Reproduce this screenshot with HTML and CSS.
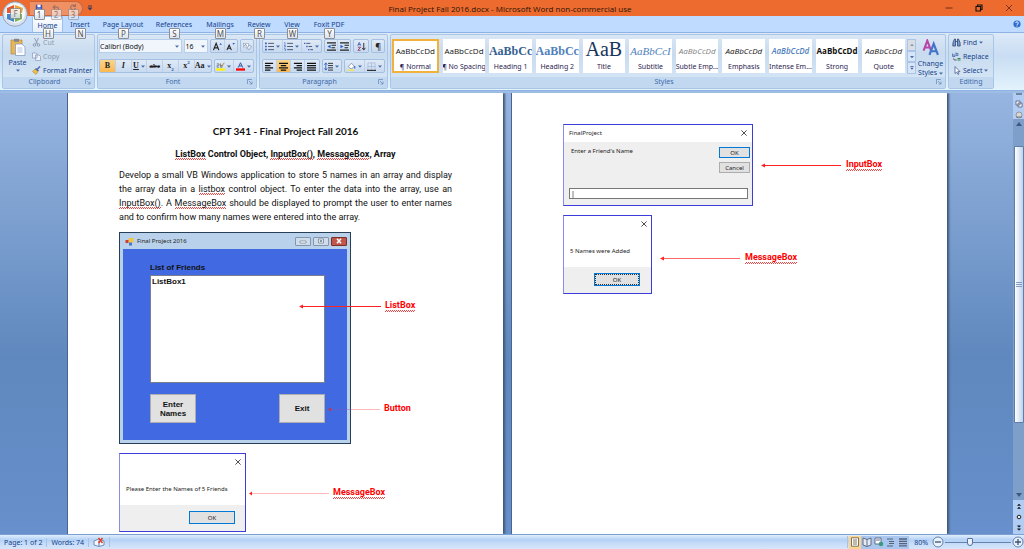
FILE: index.html
```html
<!DOCTYPE html>
<html lang="en">
<head>
<meta charset="utf-8">
<title>Final Project Fall 2016.docx - Microsoft Word non-commercial use</title>
<link rel="stylesheet" href="styles.css">
</head>
<body>
<svg class="defs" aria-hidden="true">
  <symbol id="caret" viewBox="0 0 4 3"><path d="M0 .5h4L2 2.8z" fill="#4a6ea8"/></symbol>
  <symbol id="launch" viewBox="0 0 6 6"><path d="M.5 5V.5H5M2 2l3 3M5 2.6V5H2.6" fill="none" stroke="#6f8fbd" stroke-width=".8"/></symbol>
  <symbol id="cross" viewBox="0 0 6 6"><path d="M.4.4l5.2 5.2M5.6.4L.4 5.6" stroke="#222" stroke-width=".8" fill="none"/></symbol>
</svg>

<header class="titlebar">
  <button class="orb" aria-label="Office menu">
    <svg viewBox="0 0 26 26"><circle cx="13" cy="13" r="12.3" fill="#d8e2ee" stroke="#8496ad" stroke-width=".8"/><circle cx="13" cy="12" r="10" fill="#f7f9fc"/><path d="M5 7l7-3v8H5z" fill="#e9562a"/><path d="M13 4l8 3-1 5h-7z" fill="#f0a52f"/><path d="M5 13h7v8l-7-3z" fill="#4286c9"/><path d="M13 13h7v5l-7 3z" fill="#7ab648"/></svg>
    <span class="keytip">F</span>
  </button>
  <div class="quick">
    <button aria-label="Save"><svg viewBox="0 0 10 10"><path d="M1 1h8v8H1z" fill="#3c50b4"/><path d="M3 1h4v3H3zM2.500 6h5v3h-5z" fill="#fff"/></svg><span class="keytip">1</span></button>
    <button aria-label="Undo" class="off"><svg viewBox="0 0 10 10"><path d="M2 4h4a2 2 0 010 4M4 1.500L1.500 4 4 6.500" fill="none" stroke="#a3705f" stroke-width="1.500"/></svg><span class="keytip">2</span></button>
    <button aria-label="Redo" class="off"><svg viewBox="0 0 10 10"><path d="M8 5a3 3 0 11-1-3M8 0v3H5" fill="none" stroke="#a3705f" stroke-width="1.500"/></svg><span class="keytip">3</span></button>
  </div>
  <button class="more" aria-label="Customize"><svg viewBox="0 0 6 6"><path d="M1 1h4" stroke="#333c66"/><path d="M.5 2.500h5L3 5.500z" fill="#333c66"/></svg></button>
  <h1>Final Project Fall 2016.docx - Microsoft Word non-commercial use</h1>
  <div class="syscontrols">
    <button aria-label="Minimize"><svg viewBox="0 0 8 8"><path d="M.5 4h7" stroke="#5a2a16" stroke-width=".9"/></svg></button>
    <button aria-label="Restore"><svg viewBox="0 0 8 8"><path d="M1 2.500h4.500V7H1zM2.500 2.500V1H7v4.500H5.500" fill="none" stroke="#111" stroke-width="1.100"/></svg></button>
    <button aria-label="Close"><svg viewBox="0 0 8 8"><path d="M1 1l6 6M7 1L1 7" stroke="#5a2a16" stroke-width=".8"/></svg></button>
  </div>
</header>

<nav class="tabs">
  <button class="tab active">Home<span class="keytip">H</span></button>
  <button class="tab">Insert<span class="keytip">N</span></button>
  <button class="tab">Page Layout<span class="keytip">P</span></button>
  <button class="tab">References<span class="keytip">S</span></button>
  <button class="tab">Mailings<span class="keytip">M</span></button>
  <button class="tab">Review<span class="keytip">R</span></button>
  <button class="tab">View<span class="keytip">W</span></button>
  <button class="tab">Foxit PDF<span class="keytip">Y</span></button>
  <button class="help" aria-label="Help"><svg viewBox="0 0 8 8"><circle cx="4" cy="4" r="3.600" fill="#2f6fd0"/><path d="M2.700 3c0-1.600 2.600-1.600 2.600 0 0 1-1.300 1-1.300 2M4 5.600v1" stroke="#fff" fill="none" stroke-width=".9"/></svg></button>
</nav>

<div class="ribbon">
  <section class="group clipboard">
    <div class="body">
      <button class="big"><svg viewBox="0 0 16 18"><path d="M1 2h11v14H1z" fill="#e8b656" stroke="#b98731" stroke-width=".7"/><path d="M4 .8h5v3H4z" fill="#7d8797"/><path d="M5.500 6H12l3 3v8.500H5.500z" fill="#fff" stroke="#7a94bf" stroke-width=".7"/><path d="M7.500 10h5M7.500 12h5M7.500 14h5" stroke="#9db4dc" stroke-width=".8"/></svg>Paste<svg class="caret"><use href="#caret"/></svg></button>
      <div class="stack">
        <button class="dim"><svg viewBox="0 0 9 9"><path d="M2.500 0l3 6M6.500 0l-3 6" stroke="#8d9db5" fill="none"/><circle cx="2.500" cy="7" r="1.300" fill="none" stroke="#8d9db5"/><circle cx="6.500" cy="7" r="1.300" fill="none" stroke="#8d9db5"/></svg>Cut</button>
        <button class="dim"><svg viewBox="0 0 9 9"><path d="M.5 1H4l1 1v4H.5zM3.500 3H7l1.500 1.500v4h-5z" fill="#eef3fa" stroke="#8fa2c0" stroke-width=".8"/></svg>Copy</button>
        <button><svg viewBox="0 0 9 9"><path d="M8 .5L5 3.500" stroke="#596fa8" stroke-width="1.600"/><path d="M3 3l3 2.500L4 8.500 .5 5.500z" fill="#f0c045" stroke="#a57c28" stroke-width=".5"/><path d="M3.500 2.500l3 2.500" stroke="#4a60a0" stroke-width="1.300"/></svg>Format Painter</button>
      </div>
    </div>
    <footer>Clipboard<svg class="launch"><use href="#launch"/></svg></footer>
  </section>

  <section class="group font">
    <div class="body rows">
      <div class="row">
        <span class="combo wide"><select aria-label="Font"><option>Calibri (Body)</option></select><svg class="caret"><use href="#caret"/></svg></span>
        <span class="combo narrow"><select aria-label="Font size"><option>16</option></select><svg class="caret"><use href="#caret"/></svg></span>
        <span class="bar w28"><button aria-label="Grow font"><svg viewBox="0 0 10 10"><path d="M.5 9L3.500 1.500 6.500 9M1.600 6.500h3.800" fill="none" stroke="#222" stroke-width="1.300"/><path d="M7 3h3L8.500 1z" fill="#2b5fc7"/></svg></button><button aria-label="Shrink font"><svg viewBox="0 0 10 10"><path d="M1 9l2.500-5.500L6 9M2 7h3" fill="none" stroke="#222" stroke-width="1.200"/><path d="M7 1h3L8.500 3z" fill="#2b5fc7"/></svg></button></span>
        <span class="bar w14"><button aria-label="Clear formatting"><svg viewBox="0 0 10 8"><rect x=".5" y=".5" width="5.500" height="4" fill="#fff" stroke="#8093b5" stroke-width=".6"/><path d="M1.500 3.500l1.300-2 1.300 2" stroke="#345" fill="none" stroke-width=".6"/><path d="M4 6l3-3.500 2.500 1.500L7 7.500z" fill="#e7ecf5" stroke="#6c7c9c" stroke-width=".6"/></svg></button></span>
      </div>
      <div class="row">
        <span class="bar w113"><button class="serif on"><b>B</b></button><button class="serif"><i>I</i></button><button class="serif"><u>U</u><svg class="caret"><use href="#caret"/></svg></button><button class="serif"><s>abc</s></button><button class="serif tight">x<sub>2</sub></button><button class="serif tight">x<sup>2</sup></button><button class="serif">Aa<svg class="caret"><use href="#caret"/></svg></button></span>
        <span class="bar w41"><button aria-label="Highlight"><svg viewBox="0 0 12 12"><path d="M1 2.500h3v2H1.500V7H4M6 2v5h2V4.500H6" fill="none" stroke="#555" stroke-width=".8"/><path d="M11 1L7.500 6" stroke="#b48b31" stroke-width="1.300"/><path d="M0 8.500h12v3H0z" fill="#fff200"/></svg><svg class="caret"><use href="#caret"/></svg></button><button aria-label="Font color"><svg viewBox="0 0 12 12"><path d="M3 7.500L6 1l3 6.500M4.200 5.300h3.600" fill="none" stroke="#35509c" stroke-width="1.300"/><path d="M0 8.500h12v3H0z" fill="#f00"/></svg><svg class="caret"><use href="#caret"/></svg></button></span>
      </div>
    </div>
    <footer>Font<svg class="launch"><use href="#launch"/></svg></footer>
  </section>

  <section class="group paragraph">
    <div class="body rows">
      <div class="row">
        <span class="bar w60">
          <button aria-label="Bullets"><svg viewBox="0 0 10 10"><path d="M3.500 1.500H10M3.500 5H10M3.500 8.500H10" stroke="#444c66"/><path d="M0 1.500h2M0 5h2M0 8.500h2" stroke="#3c63c4" stroke-width="1.800"/></svg><svg class="caret"><use href="#caret"/></svg></button>
          <button aria-label="Numbering"><svg viewBox="0 0 10 10"><path d="M3.500 1.500H10M3.500 5H10M3.500 8.500H10" stroke="#444c66"/><path d="M1 0v3M0 4h1.500v1.500H0M0 7.500h1.500V10" stroke="#3c63c4" fill="none" stroke-width=".8"/></svg><svg class="caret"><use href="#caret"/></svg></button>
          <button aria-label="Multilevel list"><svg viewBox="0 0 10 10"><path d="M2.500 1.500H7M5 5h4M7 8.500h3" stroke="#444c66"/><path d="M0 1.500h1.500M2.500 5H4M4.500 8.500H6" stroke="#3c63c4" stroke-width="1.500"/></svg><svg class="caret"><use href="#caret"/></svg></button>
        </span>
        <span class="bar w28">
          <button aria-label="Decrease indent"><svg viewBox="0 0 10 10"><path d="M0 1h10M5 3.700h5M5 6.300h4M0 9h10" stroke="#222" stroke-width="1.200"/><path d="M4 3v4L.5 5z" fill="#2b5fc7"/></svg></button>
          <button aria-label="Increase indent"><svg viewBox="0 0 10 10"><path d="M0 1h10M5 3.700h5M5 6.300h4M0 9h10" stroke="#222" stroke-width="1.200"/><path d="M.5 3v4L4 5z" fill="#2b5fc7"/></svg></button>
        </span>
        <span class="bar w16"><button aria-label="Sort"><svg viewBox="0 0 10 10"><path d="M.8 4L2.500.5 4.200 4M1.200 3h2.600" stroke="#3f5fb5" fill="none"/><path d="M1 5.800h3L1 9.200h3" stroke="#9b3060" fill="none"/><path d="M7.500 1v7M5.800 6.500L7.500 9l1.700-2.500" stroke="#222" fill="none"/></svg></button></span>
        <span class="bar w14"><button class="pilcrow">¶</button></span>
      </div>
      <div class="row">
        <span class="bar w57">
          <button aria-label="Align left"><svg viewBox="0 0 10 10"><path d="M0 1.500h9M0 4h6M0 6.500h9M0 9h6" stroke="#111" stroke-width="1.400"/></svg></button>
          <button aria-label="Center" class="on"><svg viewBox="0 0 10 10"><path d="M0 1.500h10M2 4h6M0 6.500h10M2 9h6" stroke="#111" stroke-width="1.400"/></svg></button>
          <button aria-label="Align right"><svg viewBox="0 0 10 10"><path d="M1 1.500h9M4 4h6M1 6.500h9M4 9h6" stroke="#111" stroke-width="1.400"/></svg></button>
          <button aria-label="Justify"><svg viewBox="0 0 10 10"><path d="M0 1.500h10M0 4h10M0 6.500h10M0 9h10" stroke="#111" stroke-width="1.400"/></svg></button>
        </span>
        <span class="bar w20"><button aria-label="Line spacing"><svg viewBox="0 0 10 10"><path d="M4.500 1.500H10M4.500 4H10M4.500 6.500H10M4.500 9H10" stroke="#222"/><path d="M2 1v8M.5 3L2 1l1.500 2M.5 7L2 9l1.500-2" stroke="#2b5fc7" fill="none"/></svg><svg class="caret"><use href="#caret"/></svg></button></span>
        <span class="bar w41">
          <button aria-label="Shading"><svg viewBox="0 0 11 11"><path d="M1.500 5.500L5.500 1.500l3.500 4-4 3z" fill="#fff" stroke="#667ba5" stroke-width=".8"/><path d="M9.500 5v3" stroke="#2b5fc7" stroke-width="1.300"/><path d="M0 9h9v2H0z" fill="#f3e26b"/></svg><svg class="caret"><use href="#caret"/></svg></button>
          <button aria-label="Borders"><svg viewBox="0 0 10 10"><path d="M1 1v8M5 1v8M9 1v8M1 1h8M1 5h8" stroke="#9fb1cf" stroke-width=".7"/><path d="M0 9.300h10" stroke="#222" stroke-width="1.200"/></svg><svg class="caret"><use href="#caret"/></svg></button>
        </span>
      </div>
    </div>
    <footer>Paragraph<svg class="launch"><use href="#launch"/></svg></footer>
  </section>

  <section class="group styles">
    <div class="body">
      <div class="gallery">
        <button class="style chosen"><span class="sample">AaBbCcDd</span><span>¶ Normal</span></button>
        <button class="style"><span class="sample">AaBbCcDd</span><span>¶ No Spacing</span></button>
        <button class="style"><span class="sample h-one">AaBbCc</span><span>Heading 1</span></button>
        <button class="style"><span class="sample h-two">AaBbCc</span><span>Heading 2</span></button>
        <button class="style"><span class="sample title">AaB</span><span>Title</span></button>
        <button class="style"><span class="sample subtitle">AaBbCcI</span><span>Subtitle</span></button>
        <button class="style"><span class="sample subtle">AaBbCcDd</span><span>Subtle Emp...</span></button>
        <button class="style"><span class="sample emph">AaBbCcDd</span><span>Emphasis</span></button>
        <button class="style"><span class="sample intense">AaBbCcDd</span><span>Intense Em...</span></button>
        <button class="style"><span class="sample strong">AaBbCcDd</span><span>Strong</span></button>
        <button class="style"><span class="sample emph">AaBbCcDd</span><span>Quote</span></button>
      </div>
      <div class="scroller">
        <button class="faded" aria-label="Up"><svg viewBox="0 0 4 3"><path d="M0 2.500h4L2 .3z" fill="#8a9ab3"/></svg></button>
        <button aria-label="Down"><svg viewBox="0 0 4 3"><use href="#caret"/></svg></button>
        <button aria-label="More styles"><svg viewBox="0 0 4 5"><path d="M0 .6h4" stroke="#3c5a94"/><path d="M0 2.200h4L2 4.600z" fill="#3c5a94"/></svg></button>
      </div>
      <button class="big change"><svg viewBox="0 0 16 16"><path d="M1.500 11L5 1.500 8.500 11M2.600 8h4.800" fill="none" stroke="#b944a8" stroke-width="1.900"/><path d="M7 15l4-10.500L15 15M8.500 11.500h5" fill="none" stroke="#4474c8" stroke-width="2"/></svg>Change<span>Styles <svg class="caret"><use href="#caret"/></svg></span></button>
    </div>
    <footer>Styles<svg class="launch"><use href="#launch"/></svg></footer>
  </section>

  <section class="group editing">
    <div class="body stack">
      <button><svg viewBox="0 0 9 9"><path d="M1 4.500L2.500 1h1v7H.8zM8 4.500L6.500 1h-1v7h2.700zM3.500 3.500h2" fill="#7f9dcc" stroke="#2e4778" stroke-width=".8"/></svg>Find <svg class="caret"><use href="#caret"/></svg></button>
      <button><svg viewBox="0 0 9 9"><path d="M.5 1.500v3h2.500V3H1M4 .5v3h2v-2H4" fill="none" stroke="#5474ad" stroke-width=".9"/><path d="M1.500 6.500c0 1.500 1.500 1.500 3 1.500" fill="none" stroke="#444"/><path d="M5.500 6.500H8.500M5.500 8h3" stroke="#31824b"/></svg>Replace</button>
      <button><svg viewBox="0 0 9 9"><path d="M3 .5v7l1.700-1.400L6 8.500l1-.6-1.200-2.300H8z" fill="#fff" stroke="#465e92" stroke-width=".8"/></svg>Select <svg class="caret"><use href="#caret"/></svg></button>
    </div>
    <footer>Editing</footer>
  </section>
</div>

<div class="workspace">
  <main class="desk">
    <article class="page">
      <h2>CPT 341 - Final Project Fall 2016</h2>
      <h3><span class="typo">ListBox</span> Control Object, <span class="typo">InputBox()</span>, <span class="typo">MessageBox</span>, Array</h3>
      <p class="intro">
        <span>Develop a small VB Windows application to store 5 names in an array and display</span>
        <span>the array data in a <span class="typo">listbox</span> control object. To enter the data into the array, use an</span>
        <span><span class="typo">InputBox()</span>. A <span class="typo">MessageBox</span> should be displayed to prompt the user to enter names</span>
        <span class="last">and to confirm how many names were entered into the array.</span>
      </p>
      <div class="figure">
        <div class="vbform">
          <div class="vbtitle">
            <svg viewBox="0 0 9 9"><path d="M3.500 1h5v4.500h-5z" fill="#f6c243"/><path d="M.5 3h3v3h-3z" fill="#c8402f"/><path d="M4 5.500h3V8.500H4z" fill="#4676c8"/></svg>
            <span>Final Project 2016</span>
            <button aria-label="Minimize form"><svg viewBox="0 0 8 6"><path d="M1 3h6v2H1z" fill="#fff" stroke="#60728a" stroke-width=".6"/></svg></button>
            <button aria-label="Maximize form"><svg viewBox="0 0 8 6"><path d="M1.500 1h5v4h-5zM3 2.500h2v1H3z" fill="#fff" stroke="#60728a" stroke-width=".7"/></svg></button>
            <button class="red" aria-label="Close form"><svg viewBox="0 0 8 6"><path d="M2 .8l4 4.400M6 .8L2 5.200" stroke="#fff" stroke-width="1.500"/></svg></button>
          </div>
          <div class="vbbody">
            <label for="friends">List of Friends</label>
            <select id="friends" size="4"><option>ListBox1</option></select>
            <div class="vbbuttons"><button>Enter<br>Names</button><button>Exit</button></div>
          </div>
        </div>
        <div class="note over-list"><svg class="arrow" viewBox="0 0 82 6" preserveAspectRatio="none"><path d="M2 3.500h80" stroke="#f22"/><path d="M0 3.500l4-2v4z" fill="#f22"/></svg><span class="typo">ListBox</span></div>
        <div class="note over-button"><svg class="arrow" viewBox="0 0 52 6"><path d="M24 3.500h28" stroke="#fbb"/><path d="M2 3.500h22" stroke="#8a58b8" stroke-opacity=".4"/><path d="M0 3.500l3-2v4z" fill="#c33"/></svg><span>Button</span></div>
      </div>
      <div class="callout">
        <div class="dialog prompt">
          <button class="close" aria-label="Close"><svg><use href="#cross"/></svg></button>
          <p>Please Enter the Names of 5 Friends</p>
          <div class="actions"><button class="ok">OK</button></div>
        </div>
        <div class="note"><svg class="arrow" viewBox="0 0 80 6"><path d="M2 3.500h78" stroke="#fbb"/><path d="M0 3.500l3-2v4z" fill="#f22"/></svg><span class="typo">MessageBox</span></div>
      </div>
    </article>

    <article class="page second">
      <div class="callout">
        <div class="dialog input">
          <div class="caption"><span>FinalProject</span><button class="close" aria-label="Close"><svg><use href="#cross"/></svg></button></div>
          <div class="ask">
            <label for="friend">Enter a Friend's Name</label>
            <div class="choices"><button class="ok">OK</button><button class="cancel">Cancel</button></div>
          </div>
          <input id="friend" type="text" value="|">
        </div>
        <div class="note wide-gap"><svg class="arrow" viewBox="0 0 80 6"><path d="M2 3.500h78" stroke="#f22"/><path d="M0 3.500l4-2v4z" fill="#f22"/></svg><span class="typo">InputBox</span></div>
      </div>
      <div class="callout">
        <div class="dialog added">
          <button class="close" aria-label="Close"><svg><use href="#cross"/></svg></button>
          <p>5 Names were Added</p>
          <div class="actions"><button class="ok focus">OK</button></div>
        </div>
        <div class="note wide-gap"><svg class="arrow" viewBox="0 0 80 6"><path d="M2 3.500h78" stroke="#f66"/><path d="M0 3.500l4-2v4z" fill="#f22"/></svg><span class="typo">MessageBox</span></div>
      </div>
    </article>
  </main>
  <aside class="vscroll">
    <div class="tools">
      <svg viewBox="0 0 8 4"><path d="M1 1h6" stroke="#333c55"/></svg>
      <svg viewBox="0 0 8 8"><path d="M1 1h4v4H1zM3 3h4v4H3z" fill="#fff" stroke="#4c5b77" stroke-width=".8"/></svg>
      <svg viewBox="0 0 8 8"><circle cx="4" cy="4" r="3" fill="#d8d8d8" stroke="#888" stroke-width=".8"/><path d="M1 6h6" stroke="#777"/></svg>
    </div>
    <div class="track">
      <svg viewBox="0 0 6 4"><path d="M0 4h6L3 0z" fill="#3f587f"/></svg>
      <div class="thumb"><svg viewBox="0 0 6 5"><path d="M0 .5h6M0 2.500h6M0 4.500h6" stroke="#6e87ac" stroke-width=".8"/></svg></div>
      <svg viewBox="0 0 6 4"><path d="M0 0h6L3 4z" fill="#3f587f"/></svg>
    </div>
    <div class="tools end">
      <svg viewBox="0 0 6 6"><path d="M1.500 2.500L3 1l1.500 1.500zM1.500 5.500L3 4l1.500 1.500z" fill="#111" stroke="#111" stroke-width=".5"/></svg>
      <svg viewBox="0 0 6 6"><circle cx="3" cy="3" r="1.800" fill="#eee" stroke="#222"/></svg>
      <svg viewBox="0 0 6 6"><path d="M1.500 .8h3L3 2.300zM1.500 3.800h3L3 5.300z" fill="#111" stroke="#111" stroke-width=".5"/></svg>
    </div>
  </aside>
</div>

<footer class="status">
  <span class="cell">Page: 1 of 2</span>
  <span class="cell">Words: 74</span>
  <span class="cell"><svg class="proof" viewBox="0 0 12 10"><path d="M1 4l5-2 5 2v4L6 9.500 1 8z" fill="#f4f7fb" stroke="#5576ad" stroke-width=".8"/><path d="M6 3.500v5.500" stroke="#5576ad"/><path d="M5.500 1l4 5M9.500 1l-4 5" stroke="#e0402a" stroke-width="1.500"/></svg></span>
  <span class="fill"></span>
  <div class="views">
    <button class="on" aria-label="Print layout"><svg viewBox="0 0 10 10"><path d="M1.500.8h7v8.400h-7zM3 3h4M3 5h4M3 7h4" fill="#fff" stroke="#6b6450" stroke-width=".9"/></svg></button>
    <button aria-label="Full screen reading"><svg viewBox="0 0 10 10"><path d="M1 1l4 1.500L9 1v7L5 9.500 1 8zM5 2.500v7" fill="#e4eaf4" stroke="#57617a" stroke-width=".9"/></svg></button>
    <button aria-label="Web layout"><svg viewBox="0 0 10 10"><path d="M1 1h6v6H1zM2 3h4" fill="#fff" stroke="#57617a" stroke-width=".9"/><circle cx="7" cy="7" r="2.300" fill="#3c9a80"/></svg></button>
    <button aria-label="Outline"><svg viewBox="0 0 10 10"><path d="M1 2h6M3 4.500h5M3 6.500h5M1 9h6" stroke="#57617a"/></svg></button>
    <button aria-label="Draft"><svg viewBox="0 0 10 10"><path d="M1 2h8M1 4.300h8M1 6.600h8M1 8.900h8" stroke="#57617a" stroke-width="1.300"/></svg></button>
  </div>
  <span class="percent">80%</span>
  <button class="round" aria-label="Zoom out"><svg viewBox="0 0 12 12"><circle cx="6" cy="6" r="5" fill="#e9f1fb" stroke="#6482b0"/><path d="M3 6h6" stroke="#3d5378" stroke-width="1.300"/></svg></button>
  <input class="zoom" type="range" min="0" max="100" value="37" aria-label="Zoom">
  <button class="round" aria-label="Zoom in"><svg viewBox="0 0 12 12"><circle cx="6" cy="6" r="5" fill="#e9f1fb" stroke="#6482b0"/><path d="M3 6h6M6 3v6" stroke="#3d5378" stroke-width="1.300"/></svg></button>
</footer>
</body>
</html>
```
FILE: styles.css
```css
* { box-sizing: border-box; }
html, body { height: 100%; margin: 0; }
body {
  display: flex; flex-direction: column; overflow: hidden;
  font: 7px/9px "Noto Sans", "Open Sans", sans-serif; color: #15428b; background: #bfdbff;
}
button { font: inherit; color: inherit; background: none; border: 0; padding: 0; margin: 0; }
svg { display: block; flex: none; }
h1, h2, h3, p { margin: 0; }
.defs { display: none; }
.caret { width: 4px; height: 3px; display: inline-block; }

.titlebar { position: relative; z-index: 3; height: 16px; flex: none; display: flex; align-items: center; background: #ed6b2e; color: #2a1409; }
.titlebar h1 { flex: 1; text-align: center; font: 400 8px/11px "Open Sans", sans-serif; padding-right: 11px; }
.orb { position: relative; width: 26px; height: 26px; margin: 12px 2px 0; }
.orb svg { width: 26px; height: 26px; }
.quick { display: flex; align-items: center; gap: 6px; height: 15px; width: 53px; padding-left: 3px; background: #f09165; border: 1px solid #c9653c; border-left: 0; border-radius: 0 8px 8px 0; }
.quick button { position: relative; width: 11px; }
.quick svg { width: 8px; height: 8px; margin: 0 auto; }
.more { padding: 0 4px; }
.more svg { width: 6px; height: 6px; }
.keytip {
  position: absolute; left: 50%; bottom: -8px; margin-left: -5px; width: 11px; height: 11px; z-index: 4;
  font: 8px/10px "Noto Sans", sans-serif; text-align: center; color: #555;
  background: linear-gradient(#fff, #dde3ec); border: 1px solid #8b8f97; border-radius: 1px;
}
.orb .keytip { bottom: 8px; opacity: .85; }
.off .keytip { opacity: .6; }
.syscontrols { display: flex; width: 90px; }
.syscontrols button { flex: 1; }
.syscontrols svg { width: 8px; height: 8px; margin: 0 auto; }

.tabs { flex: none; height: 16px; display: grid; grid-template-columns: 31px 34px 52px 50px 42px 36px 30px 44px 1fr; padding-left: 32px; z-index: 2; }
.tab { position: relative; white-space: nowrap; padding-top: 1px; }
.tab .keytip { bottom: -7px; }
.active { background: linear-gradient(#fff, #e3eefb); border: 1px solid #9fc0ea; border-bottom: 0; border-radius: 2px 2px 0 0; }
.help { justify-self: end; padding-right: 3px; }
.help svg { width: 8px; height: 8px; }

.ribbon { flex: none; display: flex; gap: 2px; padding: 1px 30px 1px 2px; height: 59px; background: linear-gradient(#dce9f8, #c9ddf3 40%, #e2f3fc); border: 1px solid #8db2e3; border-width: 1px 0; }
.group { display: flex; flex-direction: column; background: linear-gradient(#dae7f5, #c8dbef 35%, #d8e8f7); border: 1px solid #a9c6e6; border-radius: 2px; }
.group footer { position: relative; height: 11px; line-height: 10px; text-align: center; background: #c1d8f0; color: #3e6aaa; padding-right: 8px; }
.launch { position: absolute; right: 3px; top: 2px; width: 6px; height: 6px; }
.body { flex: 1; display: flex; min-height: 0; }
.clipboard { width: 93px; }
.font { width: 160px; }
.paragraph { width: 129px; }
.styles { flex: 1; min-width: 0; }
.editing { width: 46px; }
.big { width: 29px; display: flex; flex-direction: column; align-items: center; padding-top: 3px; gap: 2px; }
.big > svg:first-child { width: 16px; height: 18px; }
.stack { flex: 1; display: flex; flex-direction: column; justify-content: space-around; align-items: flex-start; }
.stack button { display: flex; align-items: center; gap: 2px; white-space: nowrap; }
.stack button > svg:first-child { width: 9px; height: 9px; }
.dim { color: #8d9aae; }
.editing .stack { padding-left: 3px; }
.editing footer { padding: 0; }

.rows { flex-direction: column; padding: 4px 2px 0 1px; gap: 6px; }
.paragraph .rows { padding-left: 2px; }
.row { display: flex; gap: 2px; height: 14px; }
.bar { display: flex; border: 1px solid #a5bfe0; border-radius: 2px; background: linear-gradient(#dfeaf7, #c8daf0); }
.bar button { flex: 1; display: flex; align-items: center; justify-content: center; gap: 2px; color: #222; }
.bar button + button { border-left: 1px solid #bcd0ea; }
.bar button svg:not(.caret) { width: 9px; height: 9px; }
.bar .on { background: linear-gradient(#fbd58d, #fbb850); }
.bar .tight { gap: 0; }
.w14 { width: 14px; } .w16 { width: 16px; } .w20 { width: 21px; } .w28 { width: 28px; } .w41 { width: 41px; }
.w57 { width: 58px; } .w60 { width: 61px; } .w113 { width: 114px; }
.serif { font: bold 8px/10px "Liberation Serif", serif; }
.serif sup, .serif sub { font-size: 5px; line-height: 5px; color: #26509c; }
.serif sup { align-self: flex-start; }
.serif sub { align-self: flex-end; }
.serif s { font-size: 7px; }
.pilcrow { font-size: 9px; }
.combo { display: flex; align-items: center; background: #f1f6fd; border: 1px solid #b8cfec; padding-right: 2px; }
.combo select { flex: 1; min-width: 0; appearance: none; border: 0; padding: 0; background: none; font: inherit; color: #111; }
.wide { width: 84px; }
.narrow { width: 24px; }

.styles .body { padding-top: 4px; }
.gallery { flex: 1; display: flex; gap: 4px; height: 36px; padding: 0 2px 0 1px; min-width: 0; }
.style { flex: 1; min-width: 0; height: 34px; overflow: hidden; background: #fff; display: flex; flex-direction: column; align-items: center; justify-content: space-between; padding: 3px 0 2px; white-space: nowrap; color: #2b2350; }
.chosen { border: 2px solid #f1b13c; padding: 1px 0 0; flex-basis: 4px; }
.sample { height: 18px; line-height: 18px; font-size: 8px; color: #111; font-family: "Open Sans", sans-serif; }
.h-one { font: bold 12px/18px "Liberation Serif", serif; color: #365f91; }
.h-two { font: bold 12px/18px "Liberation Serif", serif; color: #4f81bd; }
.title { font: 20px/15px "Liberation Serif", serif; color: #17365d; }
.subtitle { font: italic 11px/18px "Liberation Serif", serif; color: #4f81bd; }
.subtle { font-style: italic; color: #808080; }
.emph { font-style: italic; }
.intense { font-style: italic; font-weight: 600; color: #4f81bd; }
.strong { font-weight: 700; }
.scroller { width: 9px; height: 35px; display: flex; flex-direction: column; }
.scroller button { flex: 1; border: 1px solid #a9c4e6; background: #d6e5f7; }
.scroller .faded { background: #dadde2; }
.scroller svg { width: 4px; height: 4px; margin: 0 auto; }
.change { gap: 0; padding-top: 0; }
.change > svg:first-child { width: 17px; height: 17px; margin-bottom: 3px; }

.workspace { flex: 1; min-height: 0; display: flex; border-top: 2px solid #9dbde4; }
.desk { flex: 1; display: flex; justify-content: center; gap: 9px; padding-left: 2px; background: linear-gradient(#97b5e0, #5f88be 60%, #6790cc); overflow: hidden; }
.page { flex: 0 1 435px; min-height: 100%; background: #fff; color: #111; padding: 31px 51px 0; box-shadow: 2px 0 2px #3f5877, -1px 0 0 #4a6690; font-family: Roboto, sans-serif; }
.page h2 { font: bold 10px/14px Lato, sans-serif; text-align: center; }
.page h3 { font-size: 9px; line-height: 14px; text-align: center; margin-top: 9px; }
.intro { font-size: 9px; line-height: 14px; margin-top: 7px; }
.intro > span { display: block; text-align-last: justify; white-space: nowrap; }
.intro > .last { text-align-last: left; }
.typo { padding-bottom: 1px; background: repeating-conic-gradient(#ee4444 0 25%, transparent 0 50%) left bottom / 2px 2px repeat-x; }

.figure { position: relative; margin-top: 8px; }
.vbform { width: 232px; border: 1px solid #274058; background: #b9d1ea; padding: 0 3px 3px; }
.vbtitle { display: flex; align-items: center; gap: 2px; height: 16px; color: #222; font: 6px/9px "Noto Sans", sans-serif; }
.vbtitle span { flex: 1; padding-left: 1px; }
.vbtitle > svg { width: 9px; height: 9px; margin-left: 2px; }
.vbtitle button { width: 16px; height: 9px; background: #cfdcea; border: 1px solid #8396ac; border-radius: 1px; }
.vbtitle button svg { width: 8px; height: 6px; margin: 0 auto; }
.vbtitle .red { background: #c0574a; border-color: #7c3029; }
.vbbody { background: #4169e1; padding: 14px 22px 17px 27px; font: bold 8px/10px "Liberation Sans", sans-serif; color: #111; }
.vbbody label { display: block; height: 12px; }
.vbbody select { display: block; width: 100%; height: 108px; appearance: none; background: #fff; border: 1px solid #7b7f8c; border-radius: 0; padding: 1px 0; margin: 0; font: inherit; color: #111; overflow: hidden; }
.vbbody option { padding: 0 1px; min-height: 10px; font-weight: 700; color: #111; }
.vbbuttons { display: flex; justify-content: space-between; margin-top: 11px; }
.vbbuttons button { width: 46px; height: 29px; background: #e1e1e1; border: 1px solid #adadad; line-height: 9px; }

.note { display: flex; align-items: center; gap: 4px; color: #f00; font: bold 9px/11px Roboto, sans-serif; }
.arrow { width: 80px; height: 6px; }
.over-list { position: absolute; left: 180px; top: 68px; }
.over-button { position: absolute; left: 209px; top: 171px; }
.over-list .arrow { width: 82px; }
.over-button .arrow { width: 52px; }
.callout { display: flex; align-items: center; gap: 3px; margin-top: 9px; }
.wide-gap { padding-left: 5px; gap: 5px; }
.added + .note { padding-top: 6px; }
.dialog { background: #fff; border: 1px solid #3c3cd8; border-left-color: #8a8ae8; color: #222; font: 6px/8px "Noto Sans", sans-serif; display: flex; flex-direction: column; }
.close { align-self: flex-end; padding: 5px 4px 0 0; }
.close svg { width: 6px; height: 6px; }
.prompt { width: 127px; height: 79px; }
.added { width: 89px; height: 79px; }
.dialog p { flex: 1; padding: 20px 6px 0; white-space: nowrap; }
.actions { background: #efefef; height: 26px; display: flex; justify-content: flex-end; padding: 6px 10px; }
.added .actions { padding-right: 11px; }
.ok { width: 46px; height: 13px; background: #e1e1e1; border: 1px solid #0078d7; }
.focus { outline: 1px dotted #333; outline-offset: -2px; }
.second .callout:first-child { margin-top: 0; }
.input { width: 190px; height: 82px; background: #efefef; }
.caption { display: flex; justify-content: space-between; height: 17px; background: #fff; padding: 0 1px 0 5px; }
.caption .close { align-self: flex-start; }
.caption span { line-height: 16px; }
.ask { flex: 1; display: flex; justify-content: space-between; padding: 5px 2px 0 7px; }
.choices { display: flex; flex-direction: column; gap: 4px; }
.choices button { width: 31px; height: 11px; }
.cancel { background: #e1e1e1; border: 1px solid #adadad; }
.input input { height: 11px; margin: 0 4px 6px 5px; padding: 0 1px; border: 1px solid #777; font: inherit; font-size: 7px; color: #000; background: #fff; }

.vscroll { width: 11px; display: flex; flex-direction: column; background: #b1cdf3; }
.tools { display: flex; flex-direction: column; align-items: center; gap: 3px; height: 26px; }
.tools svg { width: 8px; height: 8px; }
.tools svg:first-child { height: 4px; }
.track { flex: 1; display: flex; flex-direction: column; align-items: center; justify-content: space-between; padding: 3px 0; background: #7f9fcb; }
.track > svg { width: 6px; height: 4px; }
.thumb { width: 10px; height: 74%; margin-bottom: 50px; display: flex; align-items: center; justify-content: center; background: linear-gradient(90deg, #fff, #bfd3ee); border: 1px solid #5f7da8; border-radius: 1px; }
.thumb svg { width: 6px; height: 5px; }
.end { height: 34px; justify-content: space-around; gap: 0; }
.end svg, .end svg:first-child { width: 6px; height: 6px; }

.status { flex: none; height: 15px; display: flex; align-items: center; background: linear-gradient(#e0edfc, #b4d1f5 35%, #c6dcf8 60%, #d6e6fa); border-top: 1px solid #7b9fd0; }
.cell { padding: 0 4px; border-right: 1px solid #a9c3e6; }
.proof { width: 12px; height: 10px; }
.fill { flex: 1; border-right: 1px solid #a9c3e6; height: 12px; }
.views { display: flex; margin-left: 1px; background: #a8c6ee; }
.views button { width: 12px; height: 13px; }
.views .on { background: #fbd58d; }
.views svg { width: 10px; height: 10px; margin: 0 auto; }
.percent { padding: 0 4px 0 5px; }
.round svg { width: 12px; height: 12px; }
.zoom { width: 66px; height: 12px; margin: 0 1px; appearance: none; background: linear-gradient(#6482b0, #6482b0) center / 100% 1px no-repeat; }
.zoom::-webkit-slider-thumb { appearance: none; width: 6px; height: 8px; background: #eaf1fb; border: 1px solid #56719d; border-radius: 1px 1px 3px 3px; }
```
